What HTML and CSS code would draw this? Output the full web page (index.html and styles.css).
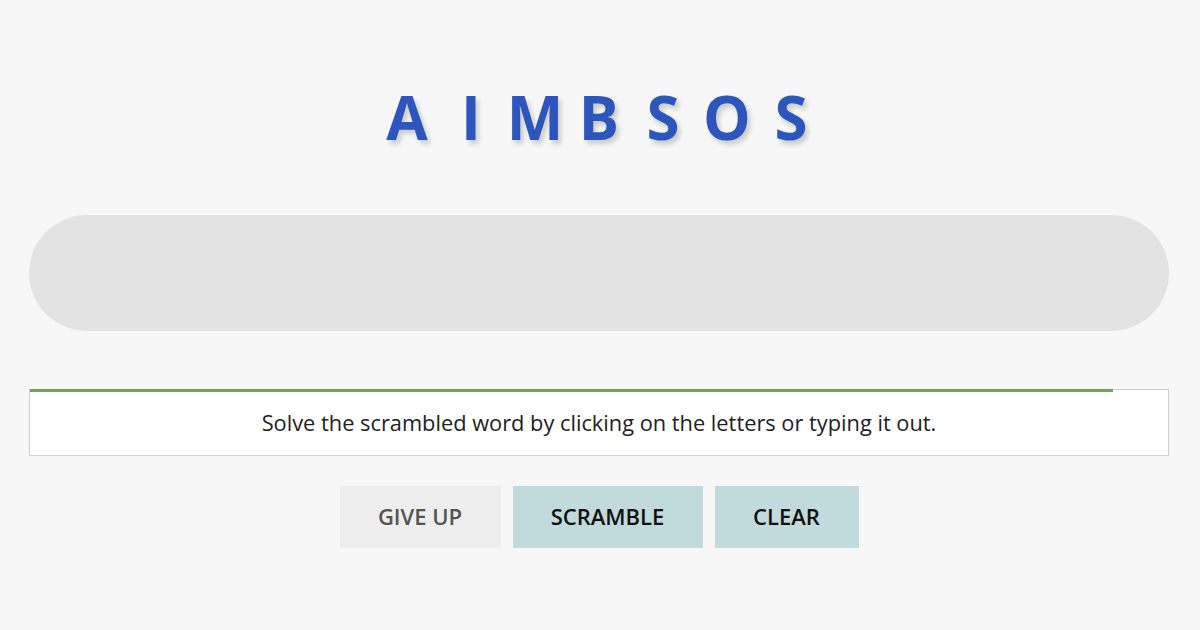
FILE: index.html
```html
<!DOCTYPE html>
<html lang="en">
<head>
<meta charset="utf-8">
<title>Word Scramble</title>
<link rel="stylesheet" href="styles.css">
</head>
<body>
<main class="game">
  <div class="scrambled">
    <span class="letter">A</span>
    <span class="letter">I</span>
    <span class="letter">M</span>
    <span class="letter">B</span>
    <span class="letter">S</span>
    <span class="letter">O</span>
    <span class="letter">S</span>
  </div>
  <div class="answer"></div>
  <div class="message">
    <div class="timer" style="width: 95.2%"></div>
    <p class="message-text">Solve the scrambled word by clicking on the letters or typing it out.</p>
  </div>
  <div class="actions">
    <button class="btn btn-giveup">GIVE UP</button>
    <button class="btn btn-scramble">SCRAMBLE</button>
    <button class="btn btn-clear">CLEAR</button>
  </div>
</main>
</body>
</html>
```

FILE: styles.css
```css
html, body {
  margin: 0;
  padding: 0;
  background: #f7f7f7;
  font-family: "Open Sans", "Noto Sans", sans-serif;
}

.game {
  padding: 77px 31px 0 29px;
  display: flex;
  flex-direction: column;
}

.scrambled {
  display: flex;
  justify-content: center;
  height: 80px;
}

.letter {
  width: 64px;
  text-align: center;
  font-size: 60px;
  font-weight: 700;
  line-height: 80px;
  color: #2c55bd;
  text-shadow: 3px 4px 5px rgba(0, 0, 0, 0.18);
}

.answer {
  margin-top: 58px;
  height: 116px;
  border-radius: 58px;
  background: #e3e3e3;
}

.message {
  position: relative;
  margin-top: 58px;
  height: 65px;
  border: 1px solid #cfcfcf;
  background: #ffffff;
  display: flex;
  align-items: center;
  justify-content: center;
}

.timer {
  position: absolute;
  top: -1px;
  left: 0;
  height: 3px;
  background: #74a05a;
}

.message-text {
  margin: 0;
  font-size: 21.8px;
  color: #222222;
}

.actions {
  margin-top: 30px;
  display: flex;
  justify-content: center;
  gap: 12px;
}

.btn {
  height: 62px;
  border: none;
  padding: 0 0 3px 0;
  font-family: "Open Sans", "Noto Sans", sans-serif;
  font-size: 22px;
  font-weight: 600;
  color: #111111;
  cursor: pointer;
}

.btn-giveup {
  width: 161px;
  background: #eeeeee;
  color: #555555;
}

.btn-scramble {
  width: 190px;
  background: #c1dadc;
}

.btn-clear {
  width: 144px;
  background: #c1dadc;
}
```
